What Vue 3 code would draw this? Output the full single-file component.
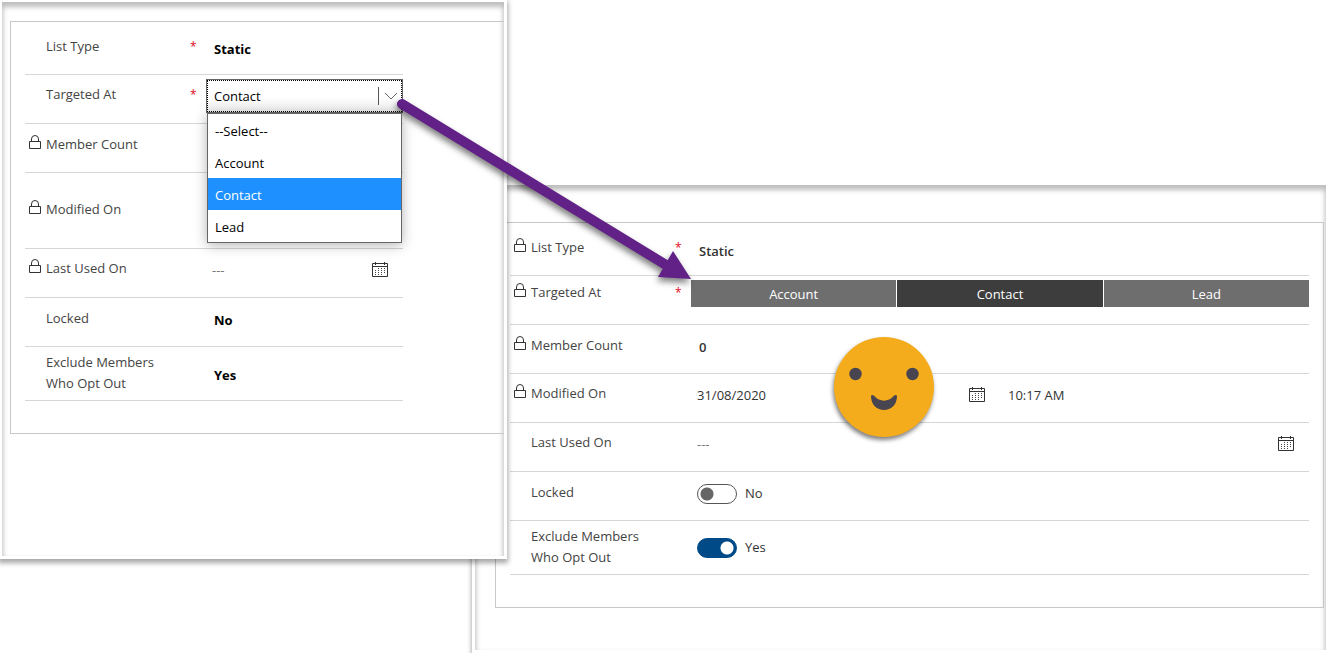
<template>
  <main class="canvas">
    <section class="shot shot-after">
      <div class="inner">
        <form class="section" @submit.prevent>
          <div class="row first">
            <LockIcon />
            <span class="label">List Type</span>
            <span class="required">*</span>
            <div class="value strong soft">Static</div>
          </div>
          <div class="row high">
            <LockIcon />
            <span class="label" id="target-label">Targeted At</span>
            <span class="required">*</span>
            <div class="segments" role="group" aria-labelledby="target-label">
              <button
                v-for="name in targets"
                :key="name"
                type="button"
                :class="{ active: name === target }"
                @click="target = name"
              >
                {{ name }}
              </button>
            </div>
          </div>
          <div class="row low">
            <LockIcon />
            <span class="label">Member Count</span>
            <div class="value strong soft">0</div>
          </div>
          <div class="row">
            <LockIcon />
            <label class="label" for="modified">Modified On</label>
            <div class="value modified">
              <input id="modified" v-model="modified" type="text" />
              <button class="icon-button" type="button" aria-label="Pick date">
                <CalendarIcon />
              </button>
              <input v-model="time" class="time" type="text" aria-label="Time" />
            </div>
          </div>
          <div class="row">
            <label class="label" for="last-used">Last Used On</label>
            <div class="value dated">
              <input id="last-used" v-model="lastUsed" type="text" placeholder="---" />
              <button class="icon-button" type="button" aria-label="Pick date">
                <CalendarIcon />
              </button>
            </div>
          </div>
          <div class="row low">
            <label class="label" for="locked">Locked</label>
            <div class="value toggle">
              <input id="locked" v-model="locked" type="checkbox" />
              <span>{{ locked ? "Yes" : "No" }}</span>
            </div>
          </div>
          <div class="row double">
            <label class="label" for="exclude">Exclude Members Who Opt Out</label>
            <div class="value toggle">
              <input id="exclude" v-model="exclude" type="checkbox" />
              <span>{{ exclude ? "Yes" : "No" }}</span>
            </div>
          </div>
        </form>
      </div>
    </section>

    <section class="shot shot-before">
      <div class="inner">
        <form class="section" @submit.prevent>
          <div class="row first">
            <span class="label">List Type</span>
            <span class="required">*</span>
            <div class="value strong">Static</div>
          </div>
          <div class="row">
            <label class="label" for="targeted">Targeted At</label>
            <span class="required">*</span>
            <div class="picker">
              <select id="targeted" v-model="picked">
                <option v-for="name in options" :key="name">{{ name }}</option>
              </select>
              <svg class="chevron" viewBox="0 0 14 8">
                <path d="M1 1l6 6 6-6" fill="none" stroke="#666" />
              </svg>
              <ul class="menu">
                <li
                  v-for="name in options"
                  :key="name"
                  :class="{ active: name === picked }"
                  @click="picked = name"
                >
                  {{ name }}
                </li>
              </ul>
            </div>
          </div>
          <div class="row low">
            <LockIcon />
            <span class="label">Member Count</span>
          </div>
          <div class="row tall">
            <LockIcon />
            <span class="label">Modified On</span>
          </div>
          <div class="row">
            <LockIcon />
            <label class="label" for="last-used-old">Last Used On</label>
            <div class="value dated">
              <input id="last-used-old" v-model="lastUsed" type="text" placeholder="---" />
              <button class="icon-button" type="button" aria-label="Pick date">
                <CalendarIcon />
              </button>
            </div>
          </div>
          <div class="row low">
            <span class="label">Locked</span>
            <div class="value strong">No</div>
          </div>
          <div class="row double">
            <span class="label">Exclude Members Who Opt Out</span>
            <div class="value strong">Yes</div>
          </div>
        </form>
      </div>
    </section>

    <svg class="arrow" viewBox="0 0 310 200">
      <path d="M12 14L281 178" stroke="#612187" stroke-width="10" stroke-linecap="round" />
      <path d="M301 189L283 161 268 187z" fill="#612187" />
    </svg>

    <svg class="smiley" viewBox="0 0 100 100">
      <circle cx="50" cy="50" r="50" fill="#f4ac1d" />
      <circle cx="21.5" cy="37" r="6.2" fill="#484450" />
      <circle cx="78.5" cy="37" r="6.2" fill="#484450" />
      <path
        d="M37 60c0-2 1.5-2.5 3-1.2 6 6.5 14 6.5 20 0 1.5-1.3 3-.8 3 1.2C62.5 68 57 73 50 73S37.5 68 37 60z"
        fill="#484450"
      />
    </svg>
  </main>
</template>

<script setup>
import { h, ref } from "vue";

const targets = ["Account", "Contact", "Lead"];
const options = ["--Select--", ...targets];

const picked = ref("Contact");
const target = ref("Contact");
const modified = ref("31/08/2020");
const time = ref("10:17 AM");
const lastUsed = ref("");
const locked = ref(false);
const exclude = ref(true);

const LockIcon = () =>
  h("svg", { class: "lock", viewBox: "0 0 12 15", width: 12, height: 15 }, [
    h("path", {
      d: "M.5 6.5h11v7H.5zM2.5 6.5V4a3.5 3.5 0 0 1 7 0v2.5",
      fill: "none",
      stroke: "#333",
    }),
  ]);

const CalendarIcon = () =>
  h("svg", { viewBox: "0 0 16 15", width: 16, height: 15 }, [
    h("path", {
      d: "M.5 1.5h15v13H.5zM0 4.5h16M3.5 0v3M12.5 0v3",
      fill: "none",
      stroke: "#333",
    }),
    // day dots, the first row starts one day later
    h("path", {
      d: "M6 6.5h8M3 8.5h11M3 10.5h11M3 12.5h8",
      fill: "none",
      stroke: "#444",
      "stroke-dasharray": "1 2",
    }),
  ]);
</script>

<style>
body {
  margin: 0;
  background: #fff;
}
</style>

<style scoped>
.canvas {
  position: relative;
  min-height: 100vh;
  overflow: hidden;
  font-family: "Open Sans", "Noto Sans", sans-serif;
  font-size: 13px;
  line-height: 21px;
  color: #333;
}

/* pasted screenshots with a white frame */
.shot {
  position: absolute;
  box-sizing: border-box;
  padding: 3px;
  background: #fff;
  box-shadow: 0 3px 5px 1px rgba(0, 0, 0, 0.35);
}

.shot-before {
  top: -1px;
  left: -1px;
  width: 508px;
}

.shot-after {
  top: 182px;
  left: 472px;
  right: 0;
  box-shadow: -1px 4px 4px rgba(0, 0, 0, 0.3);
}

.inner {
  box-shadow: inset 0 4px 5px 1px rgba(0, 0, 0, 0.26);
}

.shot-before .inner {
  padding: 19px 0 122px 8px;
}

.shot-after .inner {
  padding: 37px 2px 42px 20px;
}

.section {
  border: 1px solid #c8c8c8;
  padding: 0 14px 32px;
}

.shot-before .section {
  border-right: 0;
  padding-right: 101px;
}

.row {
  display: grid;
  grid-template-columns: 21px 144px 16px 1fr;
  align-items: start;
  box-sizing: border-box;
  height: 49px;
  border-bottom: 1px solid #d6d6d6;
  --top: 9px;
}

.row.first {
  height: 53px;
  --top: 14px;
}

.row.high {
  --top: 6px;
}

.row.low {
  --top: 10px;
}

.row.tall {
  height: 76px;
  --top: 26px;
}

.row.double {
  height: 54px;
  --top: 5px;
}

.lock {
  grid-area: 1 / 1;
  margin: calc(var(--top) + 1px) 0 0 4px;
}

.label {
  grid-area: 1 / 2;
  padding: var(--top) 24px 0 0;
  color: #444;
}

.required {
  grid-area: 1 / 3;
  padding-top: var(--top);
  font-size: 12px;
  color: #e00b1c;
}

.value {
  grid-area: 1 / 4;
  display: flex;
  align-items: center;
  padding-top: 11px;
  padding-left: 6px;
}

.strong {
  padding-top: 12px;
  padding-left: 8px;
  font-weight: 700;
  color: #000;
}

.strong.soft {
  font-weight: 600;
  color: #333;
}

.first .value {
  padding-top: 17px;
}

.double .value {
  padding-top: 16px;
}

.first .soft,
.double .strong {
  padding-top: 18px;
}

input[type="text"] {
  width: 96px;
  height: 21px;
  padding: 0;
  border: 0;
  background: none;
  font: inherit;
  color: inherit;
}

input::placeholder {
  color: #777;
  opacity: 1;
}

.icon-button {
  display: flex;
  padding: 0 0 2px;
  border: 0;
  background: none;
}

.dated {
  justify-content: space-between;
  padding-right: 15px;
}

.modified input:first-child {
  width: 272px;
}

.modified .time {
  margin-left: 23px;
}

.toggle {
  gap: 8px;
}

.toggle input {
  appearance: none;
  width: 40px;
  height: 20px;
  margin: 0;
  border: 1px solid #555;
  border-radius: 10px;
  background: radial-gradient(circle at 9px 9px, #666 6px, transparent 7px);
}

.toggle input:checked {
  border-color: #004b87;
  background: radial-gradient(circle at 29px 9px, #fff 6px, #004b87 7px);
}

.segments {
  grid-area: 1 / 4;
  display: grid;
  grid-template-columns: repeat(3, 1fr);
  gap: 1px;
  padding-top: 4px;
}

.segments button {
  height: 27px;
  padding: 2px 0 0;
  border: 0;
  background: #6e6e6e;
  font: inherit;
  color: #fff;
}

.segments button.active {
  background: #3d3d3d;
}

.picker {
  grid-area: 1 / 4;
  position: relative;
  margin-top: 4px;
}

.picker select {
  appearance: none;
  display: block;
  box-sizing: border-box;
  width: 100%;
  height: 34px;
  padding: 0 7px;
  border: 1px solid #666;
  border-radius: 0;
  outline: 1px dotted #000;
  outline-offset: -2px;
  background: linear-gradient(#fff 50%, #eee);
  font: inherit;
  color: #000;
}

.chevron {
  position: absolute;
  top: 8px;
  right: 0;
  width: 14px;
  height: 8px;
  padding: 5px;
  border-left: 1px solid #555;
}

.menu {
  position: absolute;
  z-index: 1;
  top: 34px;
  left: 1px;
  right: 1px;
  margin: 0;
  padding: 0;
  border: 1px solid #666;
  background: #fff;
  box-shadow: 0 2px 12px rgba(0, 0, 0, 0.3);
  list-style: none;
}

.menu li {
  padding: 2px 0 0 7px;
  line-height: 30px;
  color: #000;
}

.menu li.active {
  background: #1e90ff;
  color: #fff;
}

.arrow {
  position: absolute;
  top: 90px;
  left: 390px;
  width: 310px;
  height: 200px;
  overflow: visible;
  filter: drop-shadow(-1px 4px 3px rgba(0, 0, 0, 0.5));
  pointer-events: none;
}

.smiley {
  position: absolute;
  top: 337px;
  left: 834px;
  width: 100px;
  height: 100px;
  overflow: visible;
  filter: drop-shadow(-1px 3px 2px rgba(0, 0, 0, 0.5));
}
</style>
